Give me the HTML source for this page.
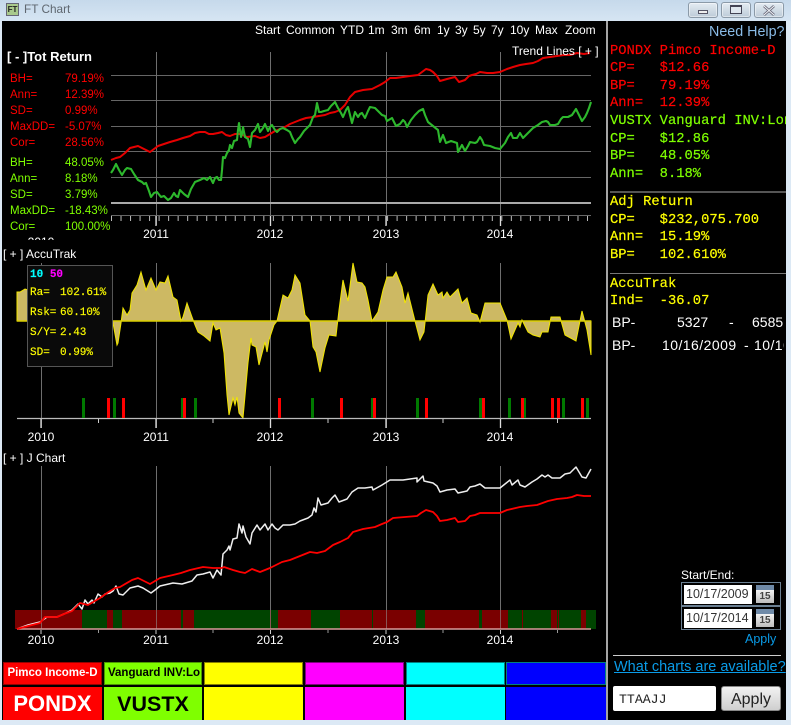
<!DOCTYPE html>
<html><head><meta charset="utf-8"><title>FT Chart</title>
<style>
html,body{margin:0;padding:0;width:791px;height:725px;overflow:hidden;background:#dce9f5;font-family:"Liberation Sans",sans-serif}
#w{position:relative;width:791px;height:725px;overflow:hidden}
.a{position:absolute}
.t{position:absolute;white-space:pre;line-height:1}
.s{font-size:11.5px}
.m{font-family:"Liberation Mono",monospace;font-size:13.8px;font-weight:400;-webkit-text-stroke:.2px currentColor}
.r{color:#f00}.g{color:#7fff00}.y{color:#ff0}.w{color:#fff}
.n{font-size:12px;color:#fff}
.b{font-size:11px;font-family:"Liberation Mono",monospace;color:#ff0;-webkit-text-stroke:.15px currentColor}
.tile{position:absolute;box-sizing:border-box;text-align:center;overflow:hidden;white-space:nowrap}
.wb{position:absolute;top:2px;height:16px;box-sizing:border-box;width:30px;border:1px solid #8b9aa8;border-radius:3px;background:linear-gradient(#e4ecf3,#bdcbd8);box-shadow:inset 0 0 0 1px rgba(255,255,255,.45)}
.y2{position:absolute;font-size:12px;color:#fff;line-height:1;width:40px;text-align:center;white-space:pre}
svg polyline{stroke-linejoin:round}
</style></head><body><div id="w">
<div class="a" style="left:0;top:0;width:791px;height:21px;background:linear-gradient(#c6d9eb,#d6e5f3)"></div>
<div class="a" style="left:6px;top:3px;width:13px;height:13px;background:#a9c98c;border:1px solid #667;box-sizing:border-box;font:bold 8px/11px 'Liberation Sans',sans-serif;color:#222;text-align:center">FT</div>
<div class="t" style="left:24px;top:4px;font-size:11.8px;color:#5f6770">FT Chart</div>
<div class="wb" style="left:688px"><div class="a" style="left:9px;top:7px;width:10px;height:4px;background:#eee;border:1px solid #556;box-sizing:border-box"></div></div>
<div class="wb" style="left:721px"><div class="a" style="left:8px;top:2px;width:12px;height:9px;border:1px solid #445;border-top-width:2px;box-sizing:border-box;background:#dfe7ef"></div></div>
<div class="wb" style="left:754px"><svg class="a" style="left:8px;top:2px" width="12" height="11"><path d="M1 1L11 10M11 1L1 10" stroke="#667" stroke-width="2.6"/><path d="M1 1L11 10M11 1L1 10" stroke="#f2f5f8" stroke-width="1"/></svg></div>

<div class="a" style="left:2px;top:21px;width:784px;height:699px;background:#000"></div>
<div class="a" style="left:606px;top:21px;width:2px;height:699px;background:#a5a5a5"></div>

<svg class="a" style="left:0;top:0" width="791" height="725" fill="none">
<!-- top chart grid -->
<g stroke="#666" stroke-width="1">
<path d="M111 75.5H591M111 100.5H591M111 126.5H591M111 151.5H591M111 177.5H591M111 215.5H591"/>
<path d="M156.5 52V225M270.5 52V225M386.5 52V225M500.5 52V225" stroke="#6e6e6e"/>
</g>
<path d="M111 203H591" stroke="#aaa" stroke-width="2"/>
<path d="M111 218.5H591" stroke="#bbb" stroke-width="5" stroke-dasharray="1 8.52"/>
<path d="M156 216V226M270.5 216V226M386 216V226M500.5 216V226" stroke="#ddd" stroke-width="1.3"/>
<!-- red top -->
<polyline stroke="#e60000" stroke-width="2" points="111,160 116,158 120,157 125,153 130,148 134,147 138,146 144,149 150,152 154,149 158,146 164,144 170,142 177,140 183,138 190,136 195,133 200,132 205,132 209,134 213,134 218,133 222,132 226,135 230,136 235,134 240,134 247,137 255,136 260,138 265,137 270,134 275,131 280,129 285,127 290,124 295,122 300,120 306,118 313,117 319,116 325,115 330,113 335,112 340,110 345,105 350,97 355,92 363,90 372,89 376,87 380,85 385,82 390,78 396,78 403,77 410,76 418,75 422,72 426,69 430,70 433,72 437,76 440,81 447,79 455,77 459,82 465,80 469,76 472,75 476,74 480,72 487,73 493,73 500,72 507,69 513,67 520,65 526,64 533,63 538,61 543,58 550,57 557,56 564,55 570,55 577,53 584,54 590,53"/>
<!-- green top -->
<polyline stroke="#2db82d" stroke-width="2.1" points="111,173 113,170 116,164 119,170 122,175 125,170 127,168 131,169 134,174 138,180 142,182 144,184 146,183 149,191 151,197 154,193 157,192 161,197 164,196 168,200 171,198 174,193 176,196 178,197 180,190 184,194 188,197 191,189 195,182 200,180 204,178 207,180 210,177 212,181 213,183 215,178 217,177 219,180 221,180 222,170 223,157 225,158 227,153 229,150 230,145 232,148 234,141 237,140 238,130 239,123 241,137 242,134 243,127 245,137 248,139 250,147 252,133 255,130 258,124 260,132 263,128 265,124 268,131 270,127 272,125 275,130 277,132 280,129 283,128 287,130 290,132 292,137 295,143 298,139 300,137 304,131 307,128 310,125 313,117 315,115 317,103 319,112 321,112 324,111 328,110 331,106 335,102 338,108 341,113 343,117 346,110 348,107 350,115 352,123 355,112 358,117 360,114 362,113 365,118 368,111 370,107 375,108 378,111 382,115 385,116 387,121 392,118 396,126 400,124 403,120 405,122 407,127 411,120 415,115 419,111 423,109 425,115 428,122 433,126 438,130 440,142 443,135 446,143 451,141 457,143 458,152 462,145 465,151 468,146 470,142 475,143 477,142 480,137 482,140 484,145 490,146 495,148 500,149 505,143 508,137 511,133 513,138 517,138 520,133 523,138 528,133 533,128 538,125 542,122 546,121 548,122 550,125 555,125 558,124 561,119 563,117 568,117 572,115 574,112 576,109 579,115 582,121 585,117 587,113 589,108 591,102"/>

<!-- AccuTrak -->
<path d="M41.5 263V428M156.5 263V428M270.5 263V428M386.5 263V428M500.5 263V428" stroke="#6e6e6e"/>
<polygon fill="#cdb963" points="17,321 17,292 20,292 25,289 35,292 50,300 70,305 90,310 108,318 113,323 117,345 118,343 121,323 123,308 127,315 130,310 132,293 137,285 141,272 146,290 151,278 156,290 160,282 165,283 168,276 173,297 177,300 181,321 183,317 187,303 192,317 195,325 198,332 204,336 210,341 213,323 216,330 220,328 224,353 227,395 229,415 233,398 235,405 237,397 239,413 243,418 248,363 251,338 252,345 256,347 259,365 265,342 267,352 269,340 274,325 277,321 283,295 288,298 292,290 295,275 300,283 305,315 310,321 313,347 316,352 320,372 325,348 329,335 336,336 339,310 343,280 348,301 353,263 357,282 362,283 365,287 368,300 372,321 378,312 383,290 387,277 393,277 396,272 402,287 405,303 408,293 415,321 420,340 424,332 428,295 433,284 438,295 442,292 443,298 447,292 450,297 458,289 462,303 467,298 471,313 477,315 480,322 485,303 500,303 507,320 511,339 518,323 520,327 522,320 528,332 533,335 540,337 542,332 548,332 551,317 560,317 565,335 576,341 582,311 587,330 591,355 591,321" stroke="#f2e600" stroke-width="1"/>
<path d="M17 321H591" stroke="#dcd000" stroke-width="1.6"/>
<path d="M17 418.5H591" stroke="#bbb" stroke-width="1.2"/>
<path d="M98.5 419V423M213 419V423M328 419V423M443 419V423M557.5 419V423" stroke="#ccc"/>
<path d="M41 419V428M156 419V428M270.5 419V428M386 419V428M500.5 419V428" stroke="#ddd" stroke-width="1.3"/>
<g stroke-width="3" stroke="#007a00">
<path d="M83.5 398V418M114.5 398V418M182.5 398V418M195.5 398V418M312.5 398V418M372.5 398V418M417.5 398V418M480.5 398V418M509.5 398V418M524.5 398V418M563.5 398V418M587.5 398V418"/>
</g>
<g stroke-width="3" stroke="#f00">
<path d="M108.5 398V418M123.5 398V418M184.5 398V418M279.5 398V418M341.5 398V418M374.5 398V418M426.5 398V418M483.5 398V418M522.5 398V418M552.5 398V418M558.5 398V418M582.5 398V418"/>
</g>

<!-- J chart -->
<path d="M41.5 466V610M156.5 466V610M270.5 466V610M386.5 466V610M500.5 466V610" stroke="#6e6e6e"/>
<path d="M41 630V634M156 630V634M270.5 630V634M386 630V634M500.5 630V634" stroke="#ccc"/>
<path d="M98.5 630V633M213 630V633M328 630V633M443 630V633M557.5 630V633" stroke="#999"/>
</svg>

<!-- J bar -->
<svg class="a" style="left:0;top:0" width="791" height="725" fill="none">
<rect x="15" y="610" width="581" height="19" fill="#7a0000"/>
<g fill="#004400">
<rect x="82" y="610" width="25" height="19"/><rect x="113" y="610" width="9" height="19"/><rect x="181" y="610" width="2" height="19"/><rect x="194" y="610" width="84" height="19"/><rect x="311" y="610" width="29" height="19"/><rect x="372" y="610" width="1" height="19"/><rect x="416" y="610" width="9" height="19"/><rect x="479" y="610" width="3" height="19"/><rect x="508" y="610" width="14" height="19"/><rect x="523" y="610" width="28" height="19"/><rect x="557" y="610" width="1" height="19"/><rect x="559" y="610" width="3" height="19"/><rect x="562" y="610" width="19" height="19"/><rect x="586" y="610" width="10" height="19"/>
</g>
<path d="M41.5 610V629M156.5 610V629M270.5 610V629M386.5 610V629M500.5 610V629" stroke="#8a5555"/>
<path d="M17 629H591" stroke="#d89a9a" stroke-width="1.6"/>
<polyline stroke="#eee" stroke-width="1.5" points="17,629 28,625 40,622 47,617 57,617 64,614 72,610 78,604 82,609 85,600 88,604 92,600 94,603 98,594 102,597 105,594 110,593 113,591 116,586 119,594 123,595 130,588 134,587 138,586 143,588 151,593 155,590 160,586 173,583 182,584 192,581 197,575 203,574 210,572 213,578 217,570 221,575 223,554 225,552 227,550 229,546 230,550 233,539 237,538 239,524 242,533 243,526 246,537 250,544 252,533 257,525 260,530 265,524 268,530 272,524 275,528 278,530 283,525 290,525 295,524 300,521 308,518 312,515 314,508 316,512 318,498 321,505 328,503 332,498 335,495 339,502 347,499 352,492 358,488 365,488 372,487 373,490 382,485 390,480 403,480 410,479 417,478 417,482 423,476 424,481 433,483 437,486 440,492 447,490 455,489 458,493 467,491 470,487 475,486 480,484 485,488 492,488 500,488 505,484 510,480 512,485 518,480 520,485 525,487 532,482 537,479 542,475 545,477 548,475 552,478 560,478 565,474 570,473 576,467 579,472 582,477 586,478 591,469"/>
<polyline stroke="#f00" stroke-width="1.8" points="17,629 28,626 40,623 45,617 57,617 64,614 72,611 80,603 88,605 100,598 107,593 115,588 120,587 132,580 138,578 144,581 150,584 155,581 160,578 173,575 181,573 190,570 203,567 213,568 222,568 224,567 233,570 240,572 245,573 252,569 260,572 270,568 276,565 282,562 290,560 295,558 300,556 310,552 317,553 325,551 333,545 340,542 348,538 353,532 363,529 375,527 382,524 387,522 393,518 405,517 417,516 421,513 426,510 433,512 437,516 440,521 447,520 455,518 458,522 465,521 470,516 475,515 480,513 490,513 500,513 507,510 520,507 527,506 537,505 548,501 557,499 567,498 572,497 577,495 584,496 591,496"/>
</svg>

<!-- menu -->
<div class="t n" style="left:255px;top:24px">Start</div>
<div class="t n" style="left:286px;top:24px">Common</div>
<div class="t n" style="left:340px;top:24px">YTD</div>
<div class="t n" style="left:368px;top:24px">1m</div>
<div class="t n" style="left:391px;top:24px">3m</div>
<div class="t n" style="left:414px;top:24px">6m</div>
<div class="t n" style="left:437px;top:24px">1y</div>
<div class="t n" style="left:455px;top:24px">3y</div>
<div class="t n" style="left:473px;top:24px">5y</div>
<div class="t n" style="left:491px;top:24px">7y</div>
<div class="t n" style="left:510px;top:24px">10y</div>
<div class="t n" style="left:535px;top:24px">Max</div>
<div class="t n" style="left:565px;top:24px">Zoom</div>
<div class="t n" style="left:512px;top:45px">Trend Lines [ + ]</div>

<!-- top stats -->
<div class="t" style="left:7px;top:50px;font-size:13px;font-weight:bold;color:#fff">[ - ]Tot Return</div>
<div class="t s r" style="left:10px;top:74px">BH=</div><div class="t s r" style="left:65px;top:74px">79.19%</div>
<div class="t s r" style="left:10px;top:90px">Ann=</div><div class="t s r" style="left:65px;top:90px">12.39%</div>
<div class="t s r" style="left:10px;top:106px">SD=</div><div class="t s r" style="left:65px;top:106px">0.99%</div>
<div class="t s r" style="left:10px;top:122px">MaxDD=</div><div class="t s r" style="left:65px;top:122px">-5.07%</div>
<div class="t s r" style="left:10px;top:138px">Cor=</div><div class="t s r" style="left:65px;top:138px">28.56%</div>
<div class="t s g" style="left:10px;top:158px">BH=</div><div class="t s g" style="left:65px;top:158px">48.05%</div>
<div class="t s g" style="left:10px;top:174px">Ann=</div><div class="t s g" style="left:65px;top:174px">8.18%</div>
<div class="t s g" style="left:10px;top:190px">SD=</div><div class="t s g" style="left:65px;top:190px">3.79%</div>
<div class="t s g" style="left:10px;top:206px">MaxDD=</div><div class="t s g" style="left:65px;top:206px">-18.43%</div>
<div class="t s g" style="left:10px;top:222px">Cor=</div><div class="t s g" style="left:65px;top:222px">100.00%</div>
<div class="a" style="left:25px;top:236px;width:32px;height:4px;overflow:hidden"><div class="y2" style="left:-4px;top:0">2010</div></div>
<div class="y2" style="left:136px;top:228px">2011</div>
<div class="y2" style="left:250px;top:228px">2012</div>
<div class="y2" style="left:366px;top:228px">2013</div>
<div class="y2" style="left:480px;top:228px">2014</div>

<!-- accutrak labels -->
<div class="t n" style="left:3px;top:248px">[ + ] AccuTrak</div>
<div class="a" style="left:27px;top:265px;width:86px;height:102px;box-sizing:border-box;background:#0a0a0a;border:1px solid #555"></div>
<div class="t b" style="left:30px;top:270px"><span style="color:#0ff;font-weight:bold">10</span> <span style="color:#f0f;font-weight:bold">50</span></div>
<div class="t b" style="left:30px;top:288px">Ra=</div><div class="t b" style="left:60px;top:288px">102.61%</div>
<div class="t b" style="left:30px;top:308px">Rsk=</div><div class="t b" style="left:60px;top:308px">60.10%</div>
<div class="t b" style="left:30px;top:328px">S/Y=</div><div class="t b" style="left:60px;top:328px">2.43</div>
<div class="t b" style="left:30px;top:348px">SD=</div><div class="t b" style="left:60px;top:348px">0.99%</div>
<div class="y2" style="left:21px;top:431px">2010</div>
<div class="y2" style="left:136px;top:431px">2011</div>
<div class="y2" style="left:250px;top:431px">2012</div>
<div class="y2" style="left:366px;top:431px">2013</div>
<div class="y2" style="left:480px;top:431px">2014</div>

<!-- J labels -->
<div class="t n" style="left:3px;top:452px">[ + ] J Chart</div>
<div class="y2" style="left:21px;top:634px">2010</div>
<div class="y2" style="left:136px;top:634px">2011</div>
<div class="y2" style="left:250px;top:634px">2012</div>
<div class="y2" style="left:366px;top:634px">2013</div>
<div class="y2" style="left:480px;top:634px">2014</div>

<!-- tiles -->
<div class="tile" style="left:3px;top:662px;width:99px;height:23px;background:#f00;border:1px solid #900;color:#fff;font:bold 11.5px/21px 'Liberation Sans',sans-serif">Pimco Income-D</div>
<div class="tile" style="left:104px;top:662px;width:98px;height:23px;background:#7fff00;border:1px solid #4c9900;color:#000;font:bold 11.5px/21px 'Liberation Sans',sans-serif;text-align:left;padding-left:3px">Vanguard INV:Lo</div>
<div class="tile" style="left:204px;top:662px;width:99px;height:23px;background:#ff0;border:1px solid #888000"></div>
<div class="tile" style="left:305px;top:662px;width:99px;height:23px;background:#f0f;border:1px solid #800080"></div>
<div class="tile" style="left:406px;top:662px;width:99px;height:23px;background:#0ff;border:1px solid #008080"></div>
<div class="tile" style="left:506px;top:662px;width:100px;height:23px;background:#00f;border:1px solid #008080"></div>
<div class="tile" style="left:3px;top:687px;width:99px;height:33px;background:#f00;color:#fff;font:bold 22px/34px 'Liberation Sans',sans-serif">PONDX</div>
<div class="tile" style="left:104px;top:687px;width:98px;height:33px;background:#7fff00;color:#000;font:bold 21.5px/34px 'Liberation Sans',sans-serif">VUSTX</div>
<div class="tile" style="left:204px;top:687px;width:99px;height:33px;background:#ff0"></div>
<div class="tile" style="left:305px;top:687px;width:99px;height:33px;background:#f0f"></div>
<div class="tile" style="left:406px;top:687px;width:99px;height:33px;background:#0ff"></div>
<div class="tile" style="left:506px;top:687px;width:100px;height:33px;background:#00f"></div>

<!-- right panel -->
<div class="a" style="left:608px;top:21px;width:178px;height:340px;overflow:hidden">
<div class="t" style="left:101px;top:4px;font-size:14.3px;color:#8abbe6">Need Help?</div>
<div class="t m r" style="left:2px;top:24px">PONDX Pimco Income-D</div>
<div class="t m r" style="left:2px;top:41px">CP=   $12.66</div>
<div class="t m r" style="left:2px;top:59px">BP=   79.19%</div>
<div class="t m r" style="left:2px;top:76px">Ann=  12.39%</div>
<div class="t m g" style="left:2px;top:94px">VUSTX Vanguard INV:Lon</div>
<div class="t m g" style="left:2px;top:112px">CP=   $12.86</div>
<div class="t m g" style="left:2px;top:129px">BP=   48.05%</div>
<div class="t m g" style="left:2px;top:147px">Ann=  8.18%</div>
<div class="a" style="left:2px;top:170px;width:176px;height:2px;background:#555"></div>
<div class="t m y" style="left:2px;top:175px">Adj Return</div>
<div class="t m y" style="left:2px;top:193px">CP=   $232,075.700</div>
<div class="t m y" style="left:2px;top:210px">Ann=  15.19%</div>
<div class="t m y" style="left:2px;top:228px">BP=   102.610%</div>
<div class="a" style="left:2px;top:252px;width:176px;height:1px;background:#777"></div>
<div class="t m y" style="left:2px;top:257px">AccuTrak</div>
<div class="t m y" style="left:2px;top:274px">Ind=  -36.07</div>
<div class="t w" style="left:4px;top:294px;font-size:14px">BP-</div>
<div class="t w" style="left:69px;top:294px;font-size:14px">5327</div>
<div class="t w" style="left:121px;top:294px;font-size:14px">-</div>
<div class="t w" style="left:144px;top:294px;font-size:14px">6585</div>
<div class="t w" style="left:4px;top:317px;font-size:14px">BP-</div>
<div class="t w" style="left:54px;top:317px;font-size:14px;letter-spacing:.45px">10/16/2009</div>
<div class="t w" style="left:136px;top:317px;font-size:14px">-</div>
<div class="t w" style="left:146px;top:317px;font-size:14px;letter-spacing:.45px;width:30px;overflow:hidden">10/16/2014</div>
</div>

<div class="t" style="left:681px;top:569px;font-size:12px;color:#fff">Start/End:</div>
<div class="a" style="left:681px;top:582px;width:100px;height:24px;box-sizing:border-box;border:1px solid #6a7f92"></div>
<div class="a" style="left:681px;top:606px;width:100px;height:24px;box-sizing:border-box;border:1px solid #6a7f92"></div>
<div class="a" style="left:684px;top:585px;width:68px;height:19px;background:#fff;font-size:12.5px;line-height:19px;color:#333;text-indent:2px;white-space:pre">10/17/2009</div>
<div class="a" style="left:684px;top:609px;width:68px;height:19px;background:#fff;font-size:12.5px;line-height:19px;color:#333;text-indent:2px;white-space:pre">10/17/2014</div>
<div class="a" style="left:756px;top:585px;width:18px;height:18px;background:linear-gradient(#f2f2f2,#bdbdbd);border-top:5px solid #6f8aa8;box-sizing:border-box;font-size:10px;font-weight:bold;line-height:14px;color:#444;text-align:center">15</div>
<div class="a" style="left:756px;top:609px;width:18px;height:18px;background:linear-gradient(#f2f2f2,#bdbdbd);border-top:5px solid #6f8aa8;box-sizing:border-box;font-size:10px;font-weight:bold;line-height:14px;color:#444;text-align:center">15</div>
<div class="t" style="left:745px;top:633px;font-size:12.5px;color:#0a9ce8">Apply</div>
<div class="a" style="left:613px;top:655px;width:168px;height:1px;background:#ccc"></div>
<div class="t" style="left:614px;top:660px;font-size:14.5px;color:#0a9ce8;text-decoration:underline">What charts are available?</div>
<div class="a" style="left:613px;top:686px;width:103px;height:25px;background:#fff;border-radius:2px"></div>
<div class="t" style="left:619px;top:693px;font-family:'Liberation Mono',monospace;font-size:13.2px;color:#222">TTAAJJ</div>
<div class="a" style="left:721px;top:686px;width:60px;height:25px;box-sizing:border-box;border:1px solid #888;border-radius:3px;background:linear-gradient(#f2f2f2,#cfcfcf);text-align:center;font-size:16px;line-height:25px;color:#222">Apply</div>
</div></body></html>
